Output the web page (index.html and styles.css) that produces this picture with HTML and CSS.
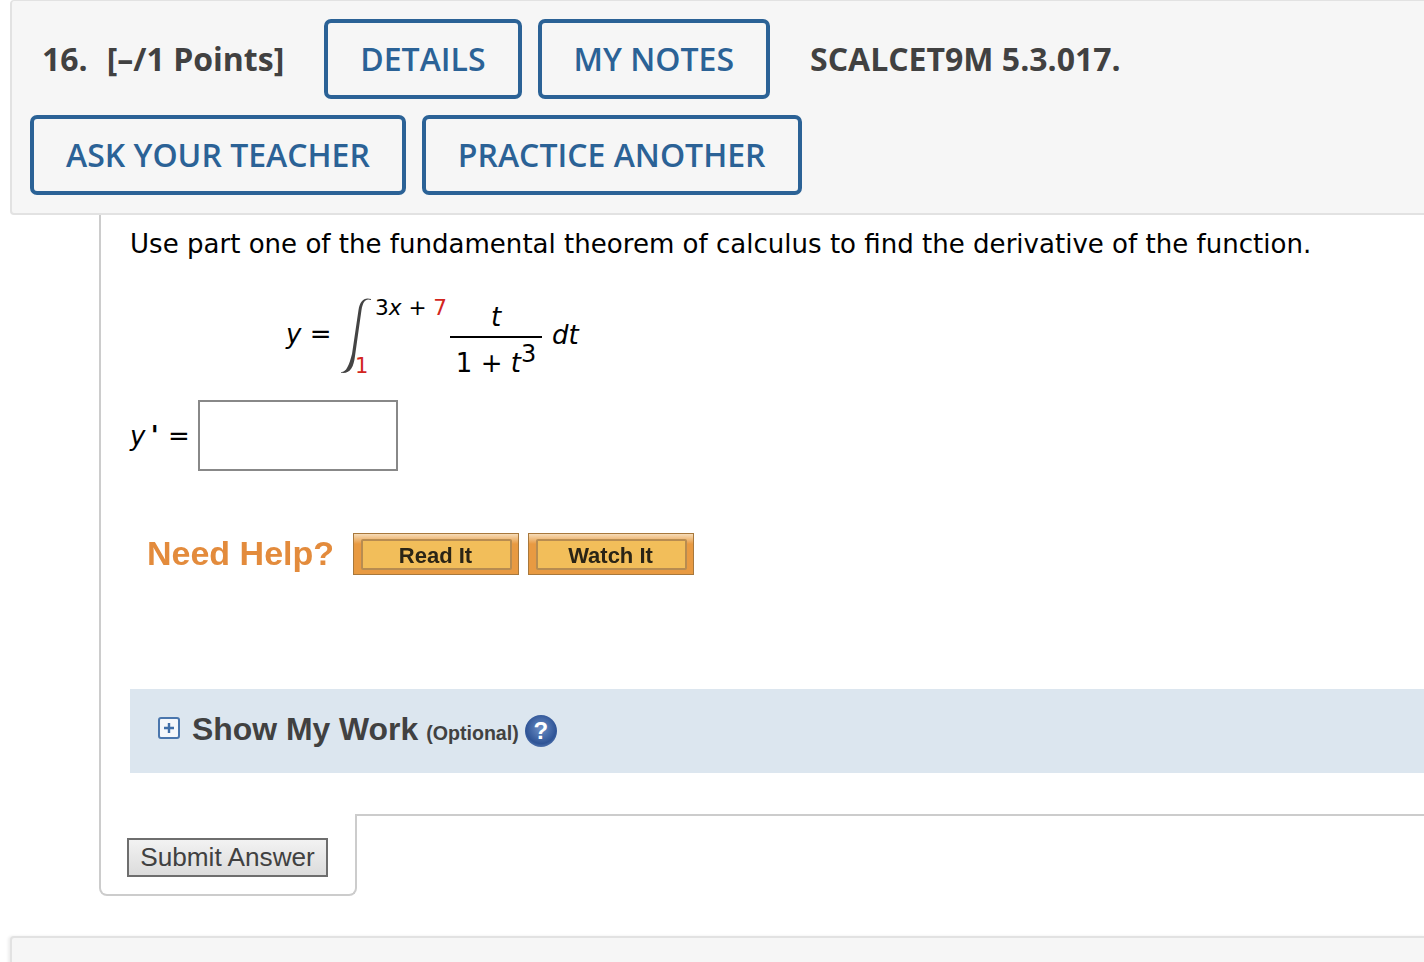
FILE: index.html
```html
<!DOCTYPE html>
<html>
<head>
    <meta charset="UTF-8">
    <meta name="viewport" content="width=device-width, initial-scale=1.0">
    <title>Question 16</title>
    <link rel="stylesheet" href="styles.css">
</head>
<body>
    <div class="question-header">
        <div class="header-row first-row">
            <span class="question-title"><span class="question-num">16.</span>[&ndash;/1 Points]</span>
            <a class="outline-btn">DETAILS</a>
            <a class="outline-btn">MY NOTES</a>
            <span class="question-code">SCALCET9M 5.3.017.</span>
        </div>
        <div class="header-row">
            <a class="outline-btn">ASK YOUR TEACHER</a>
            <a class="outline-btn">PRACTICE ANOTHER</a>
        </div>
    </div>

    <div class="question-body">
        <p class="prompt">Use part one of the fundamental theorem of calculus to find the derivative of the function.</p>

        <div class="equation">
            <span class="math-lhs"><i>y</i> =</span>
            <svg class="integral" width="34" height="84" viewBox="0 0 34 84">
                <path d="M33 6 C28 4 25 7 23.5 16 L17 62 C15.5 74 12 80 3 78.8 L3 78 C8 78.4 11 72 14 60 L20.5 16 C22 7 26 3 33 5 Z" fill="#444"/>
            </svg>
            <div class="limits">
                <span class="limit-top">3<i>x</i> + <span class="red">7</span></span>
                <span class="limit-bottom red">1</span>
            </div>
            <div class="fraction">
                <span class="numerator"><i>t</i></span>
                <span class="denominator">1 + <i>t</i><sup>3</sup></span>
            </div>
            <span class="math-dt"><i>dt</i></span>
        </div>

        <div class="answer-row">
            <span class="answer-label"><i>y</i> <i class="prime">'</i> =</span>
            <input class="answer-input" type="text">
        </div>

        <div class="need-help">
            <span class="need-help-label">Need Help?</span>
            <span class="help-btn"><span class="help-btn-inner">Read It</span></span>
            <span class="help-btn"><span class="help-btn-inner">Watch It</span></span>
        </div>

        <div class="show-work">
            <span class="plus-box">
                <svg width="22" height="22" viewBox="0 0 22 22">
                    <rect x="1" y="1" width="20" height="20" rx="2" fill="#f4f7fb" stroke="#4a76ad" stroke-width="2"/>
                    <path d="M11 6 V16 M6 11 H16" stroke="#3f6ea8" stroke-width="2.4"/>
                </svg>
            </span>
            <span class="show-work-title">Show My Work</span>
            <span class="show-work-opt">(Optional)</span>
            <span class="help-icon">?</span>
        </div>
    </div>

    <div class="submit-row">
        <div class="submit-tab">
            <button class="submit-btn">Submit Answer</button>
        </div>
        <div class="submit-rest"></div>
    </div>

    <div class="next-question"></div>
</body>
</html>
```

FILE: styles.css
```css
html, body {
    height: 100%;
    overflow: hidden;
}

body {
    margin: 0;
    padding-left: 10px;
    background-color: #fff;
    font-family: "DejaVu Sans", sans-serif;
    color: #000;
}

.question-header {
    box-sizing: border-box;
    height: 215px;
    margin-right: -4px;
    padding: 18px 0 0 18px;
    background-color: #f6f6f6;
    border: 2px solid #e2e2e2;
    border-top-width: 1px;
    border-radius: 4px;
    font-family: "Open Sans", sans-serif;
}

.header-row {
    display: flex;
    align-items: center;
    gap: 16px;
}

.first-row {
    margin-bottom: 16px;
}

.question-title,
.question-code {
    font-size: 32px;
    font-weight: 700;
    color: #414141;
    margin-bottom: 2px;
}

.question-title {
    margin-left: 12px;
    margin-right: 24px;
}

.question-num {
    margin-right: 19px;
}

.question-code {
    margin-left: 24px;
}

.outline-btn {
    box-sizing: border-box;
    height: 80px;
    padding: 0 32px 2px;
    display: flex;
    align-items: center;
    border: 4px solid #2b6296;
    border-radius: 7px;
    font-size: 32px;
    font-weight: 600;
    color: #2b6296;
}

.question-body {
    margin-left: 89px;
    padding-left: 29px;
    height: 600px;
    border-left: 2px solid #ccc;
    box-sizing: border-box;
}

.prompt {
    margin: 0;
    padding-top: 12px;
    font-size: 26.06px;
    line-height: 34px;
}

.equation {
    display: flex;
    align-items: center;
    margin: 33px 0 0 156px;
    height: 84px;
    font-size: 26px;
}

.math-lhs {
    width: 52px;
    margin-bottom: 4px;
}

.limits {
    display: flex;
    flex-direction: column;
    justify-content: space-between;
    height: 84px;
    width: 75px;
    margin-left: 3px;
}

.limit-top {
    font-size: 21.6px;
    line-height: 28px;
}

.limit-bottom {
    font-size: 21px;
    line-height: 24px;
    margin-left: -20px;
    margin-bottom: 0;
}

.red {
    color: #d2261e;
}

.fraction {
    display: flex;
    flex-direction: column;
    align-items: center;
    width: 92px;
}

.numerator {
    height: 42px;
    line-height: 47px;
    width: 100%;
    text-align: center;
    border-bottom: 2px solid #000;
}

.denominator {
    height: 40px;
    line-height: 50px;
}

.denominator sup {
    font-size: 24px;
    line-height: 0;
}

.math-dt {
    margin-left: 10px;
    margin-bottom: 2px;
}

.answer-row {
    display: flex;
    align-items: center;
    margin-top: 22px;
    font-size: 26px;
}

.answer-label {
    width: 68px;
}

.prime {
    font-weight: 700;
    font-size: 26px;
    margin-left: -3px;
    margin-right: 1px;
}

.answer-input {
    box-sizing: border-box;
    width: 200px;
    height: 71px;
    border: 2px solid #888;
    background-color: #fff;
}

.need-help {
    display: flex;
    align-items: center;
    margin: 62px 0 0 17px;
    font-family: "Liberation Sans", sans-serif;
}

/* these were scaled-up images in the original, so keep them a bit soft */
.need-help-label {
    width: 206px;
    font-size: 34px;
    font-weight: 700;
    color: #e38b3c;
    margin-bottom: 2px;
    filter: blur(0.6px);
}

.help-btn {
    box-sizing: border-box;
    width: 166px;
    height: 42px;
    margin-right: 9px;
    padding: 5px 6px 4px 7px;
    background: linear-gradient(#f6dcb8, #e89a42 25%, #e89a42);
    border: 1px solid #a8783c;
    display: flex;
}

.help-btn-inner {
    flex: 1;
    padding-right: 2px;
    text-align: center;
    background-color: #f2be5a;
    border: 2px solid #b88c50;
    border-radius: 2px;
    font-size: 22px;
    line-height: 30px;
    font-weight: 700;
    color: #2a2416;
    filter: blur(0.4px);
}

.show-work {
    box-sizing: border-box;
    display: flex;
    align-items: center;
    margin-top: 114px;
    height: 84px;
    padding: 0 0 4px 28px;
    background-color: #dce6ef;
    font-family: "Liberation Sans", sans-serif;
    color: #414141;
}

.plus-box {
    display: flex;
    margin-right: 12px;
    margin-bottom: 2px;
}

.show-work-title {
    font-size: 31.9px;
    font-weight: 700;
    margin-right: 8px;
}

.show-work-opt {
    font-size: 19.6px;
    font-weight: 700;
    margin-top: 8px;
    margin-right: 6px;
}

.help-icon {
    width: 32px;
    height: 32px;
    margin-top: 3px;
    border-radius: 50%;
    background: radial-gradient(circle at 50% 42%, #6d8fc6, #2f5496 62%, #6f90c4 92%);
    color: #fff;
    font-size: 24px;
    font-weight: 700;
    line-height: 32px;
    text-align: center;
}

.submit-row {
    display: flex;
    margin-left: 89px;
}

.submit-tab {
    box-sizing: border-box;
    width: 258px;
    height: 81px;
    padding: 23px 0 0 26px;
    border: 2px solid #ccc;
    border-top: none;
    border-radius: 0 0 8px 8px;
}

.submit-rest {
    flex: 1;
    margin-left: -2px;
    margin-top: -1px;
    border-top: 2px solid #ccc;
    height: 0;
}

.submit-btn {
    box-sizing: border-box;
    width: 201px;
    height: 39px;
    padding: 0;
    background: linear-gradient(#f2f2f2, #dcdcdc);
    border: 2px solid #6e6e6e;
    font-family: "Liberation Sans", sans-serif;
    font-size: 26.2px;
    color: #414141;
}

.next-question {
    height: 60px;
    margin-top: 40px;
    margin-right: -4px;
    background-color: #f6f6f6;
    border: 2px solid #e2e2e2;
    border-radius: 4px;
    box-shadow: -2px 0 3px #eee;
}
```
